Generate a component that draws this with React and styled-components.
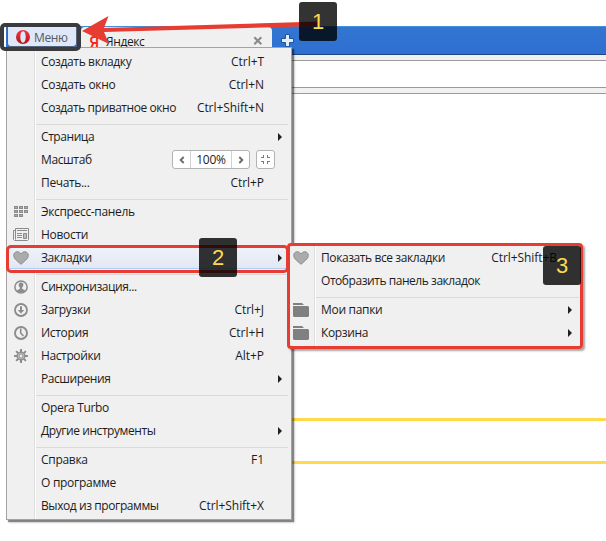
import React from "react";
import styled, { createGlobalStyle } from "styled-components";

const GlobalStyle = createGlobalStyle`
  * { box-sizing: border-box; }
  body { margin: 0; background: #fff; overflow: hidden; }
`;

const Page = styled.div`
  position: relative;
  width: 606px;
  height: 541px;
  overflow: hidden;
  background: #fff;
  color: #1c1c1c;
  font: 12px/23px "Open Sans", "Noto Sans", sans-serif;
`;

/* ---------- Browser window ---------- */
const Browser = styled.div`
  margin-left: 6px;
  padding-top: 26px;
`;

const TabStrip = styled.div`
  display: flex;
  align-items: stretch;
  height: 29px;
  border-top: 1px solid #438fdb;
  border-bottom: 1px solid #1d4a86;
  background: linear-gradient(#3376d0, #2e6fd2);
`;

const MenuButton = styled.button`
  display: flex;
  align-items: center;
  gap: 4px;
  width: 70px;
  height: 20px;
  margin: 0 0 0 1px;
  padding: 1px 0 0 8px;
  border: 1px solid #56647a;
  border-top: 0;
  border-radius: 0 0 4px 4px;
  background: #dfe8f8;
  color: #565a61;
  font: inherit;
  letter-spacing: -0.35px;
`;

const Tab = styled.div`
  display: flex;
  align-items: flex-start;
  width: 191px;
  margin-left: 4px;
  padding: 6px 9px 0 7px;
  border-radius: 4px 4px 0 0;
  background: #f0f0f0;
`;

const TabTitle = styled.span`
  flex: 1;
  margin: 2px 0 0 7px;
  line-height: 14px;
  letter-spacing: -0.4px;
`;

const SiteMark = styled.span`
  width: 11px;
  color: #f5291b;
  font: bold 18px/20px "Liberation Sans", sans-serif;
  transform: scaleX(0.72);
`;

const NewTab = styled.div`
  margin: 7px 0 0 9px;
  line-height: 0;
`;

const Toolbar = styled.div`
  height: 39px;
  padding-top: 5px;
  border-bottom: 1px solid #9a9a9a;
  background: #f1f1f1;
`;

const AddressBar = styled.div`
  height: 28px;
  border-top: 1px solid #9a9a9a;
  border-bottom: 1px solid #9a9a9a;
  background: #fff;
`;

const Content = styled.div`
  padding-top: 324px;
`;

const YellowFrame = styled.div`
  height: 46px;
  border-top: 3px solid #ffda4b;
  border-bottom: 3px solid #ffda4b;
`;

/* ---------- Menus (overlays) ---------- */
const MenuPanel = styled.div`
  position: absolute;
  left: 6px;
  top: 47px;
  width: 286px;
  height: 473px;
  padding: 2px 2px 1px 0;
  border: 1px solid #a3a3a3;
  background: linear-gradient(90deg, #f0f0f0 27px, #dedede 27px 28px, #fff 28px 29px, #f0f0f0 29px);
  box-shadow: 2px 2px 1px rgba(0, 0, 0, 0.42), 3px 3px 2px rgba(0, 0, 0, 0.12);
`;

const SubmenuPanel = styled(MenuPanel)`
  left: 287px;
  top: 243px;
  width: 296px;
  height: 106px;
  padding: 0;
  border: 3px solid #e63c31;
  border-radius: 4px;
  background: linear-gradient(90deg, #f0f0f0 24px, #dedede 24px 25px, #fff 25px 26px, #f0f0f0 26px);
  box-shadow: 2px 2px 2px rgba(0, 0, 0, 0.35);
`;

const Row = styled.div`
  display: flex;
  align-items: center;
  height: 23px;
  margin-right: 1px;
  background: ${(p) => (p.$active ? "linear-gradient(rgba(240,243,249,.9), rgba(224,231,243,.9))" : "none")};
  box-shadow: ${(p) => (p.$active ? "inset 0 -1px #aecff7" : "none")};
`;

const IconCell = styled.span`
  display: flex;
  justify-content: center;
  align-items: center;
  width: ${(p) => (p.$sub ? 31 : 34)}px;
  padding-right: ${(p) => (p.$sub ? 9 : 6)}px;
`;

const Label = styled.span`
  flex: 1;
  white-space: nowrap;
  letter-spacing: ${(p) => p.$track - 0.05}px;
`;

const Shortcut = styled.span`
  margin-right: ${(p) => (p.$sub ? 22 : 24)}px;
  white-space: nowrap;
  letter-spacing: -0.06px;
`;

const Divider = styled.div`
  height: 6px;
  margin: 0 1px 0 ${(p) => (p.$sub ? 26 : 29)}px;
  border-bottom: 1px solid #dadada;
`;

const SubArrow = styled.i`
  margin-right: ${(p) => (p.$sub ? 7 : 6)}px;
  border: solid transparent;
  border-width: 4px 0 4px 4px;
  border-left-color: #202020;
`;

const ZoomControls = styled.div`
  display: flex;
  gap: 6px;
  margin-right: 13px;
`;

const ZoomGroup = styled.div`
  display: flex;
  height: 19px;
  border: 1px solid #b3b3b3;
  border-radius: 3px;
  background: #fff;
  line-height: 17px;
`;

const ZoomCell = styled.span`
  display: flex;
  justify-content: center;
  align-items: center;
  width: ${(p) => p.$w}px;
  border-left: ${(p) => (p.$split ? "1px solid #d0d0d0" : "0")};
  letter-spacing: -0.2px;
`;

/* ---------- Annotations ---------- */
const Outline = styled.div`
  position: absolute;
  left: ${(p) => p.$x}px;
  top: ${(p) => p.$y}px;
  width: ${(p) => p.$w}px;
  height: ${(p) => p.$h}px;
  border: ${(p) => p.$b}px solid ${(p) => p.$color};
  border-radius: 5px;
`;

const ArrowLayer = styled.svg`
  position: absolute;
  left: 78px;
  top: 10px;
`;

const Badge = styled.div`
  position: absolute;
  left: ${(p) => p.$x}px;
  top: ${(p) => p.$y}px;
  width: 38px;
  height: 39px;
  border-radius: 3px;
  background: rgba(0, 0, 0, 0.8);
  color: #ffd94c;
  text-align: center;
  font: 22px/39px "Liberation Sans", sans-serif;
`;

/* ---------- Icons ---------- */
const ICON = "#8b8b8b";

const icons = {
  grid: (
    <svg width="14" height="12" viewBox="0 0 14 12" fill="#8b8b8b">
      {[0, 5, 10].map((x) =>
        [0, 4, 8].map((y) => (x === 10 && y === 8 ? null : <g key={`${x}-${y}`}>
          <rect x={x} y={y} width="4" height="3" /><rect x={x + 1} y={y + 1} width="2" height="1" fill="#aaa" /></g>))
      )}
    </svg>
  ),
  news: (
    <svg width="16" height="13" viewBox="0 0 16 13" fill="none" stroke={ICON}>
      <path d="M2.500 2.500h-2v9l1 1H14.500l1-1V.5h-13v11" />
      <path d="M4 2.500h10M4 5.500h5M4 7.500h5M4 9.500h5" />
      <path d="M10.500 5.500h3v5h-3z" fill="#bbb" />
    </svg>
  ),
  heart: (
    <svg width="16" height="14" viewBox="0 0 16 14">
      <path d="M8 13.300C5.500 11 .7 7.900.7 4.400.7 2.300 2.300.7 4.300.7 5.900.7 7.300 1.600 8 3 8.700 1.600 10.100.7 11.700.7 13.700.7 15.300 2.300 15.300 4.400 15.300 7.900 10.500 11 8 13.300Z" fill="#ababab" stroke="#8f8f8f" />
    </svg>
  ),
  sync: (
    <svg width="14" height="14" viewBox="0 0 14 14">
      <circle cx="7" cy="7" r="6.100" fill="none" stroke={ICON} strokeWidth="1.500" />
      <path d="M7 2.500a2.300 2.300 0 0 0-2.300 2.500c0 1.300.6 2 1.200 2.600v1.200L2.800 10.500C4 12 5.400 12.700 7 12.700s3-.7 4.200-2.200L8.100 8.800V7.600C8.700 7 9.300 6.300 9.300 5A2.300 2.300 0 0 0 7 2.500z" fill={ICON} />
    </svg>
  ),
  download: (
    <svg width="14" height="14" viewBox="0 0 14 14">
      <circle cx="7" cy="7" r="6" fill="none" stroke={ICON} strokeWidth="1.800" />
      <path d="M6 3.200h2V7h2.300L7 10.500 3.700 7H6z" fill={ICON} />
    </svg>
  ),
  history: (
    <svg width="14" height="14" viewBox="0 0 14 14" fill="none" stroke={ICON}>
      <circle cx="7" cy="7" r="6" strokeWidth="1.900" />
      <path d="M6.700 2.500V7l2.700 3" strokeWidth="1.600" />
    </svg>
  ),
  gear: (
    <svg width="14" height="14" viewBox="0 0 14 14" fill="none" stroke={ICON}>
      <circle cx="7" cy="7" r="3.800" strokeWidth="1.500" />
      <circle cx="7" cy="7" r="2.900" stroke="#b0b0b0" strokeWidth=".8" />
      <circle cx="7" cy="7" r="2" strokeWidth="1" />
      {[0, 45, 90, 135, 180, 225, 270, 315].map((a) => (
        <path key={a} d="M7 .1v2.800" strokeWidth="2" transform={`rotate(${a} 7 7)`} />
      ))}
    </svg>
  ),
  folder: (
    <svg width="16" height="14" viewBox="0 0 16 14" fill="#808080">
      <path d="M0 0h9l2 2H0z" />
      <path d="M0 3h15l1 1v9l-1 1H1l-1-1z" />
    </svg>
  ),
};

const OperaLogo = () => (
  <svg width="14" height="14" viewBox="0 0 14 14">
    <defs>
      <linearGradient id="opera" x1="0" y1="0" x2="0" y2="1">
        <stop offset="0" stopColor="#ef3a3f" />
        <stop offset="1" stopColor="#b80f1c" />
      </linearGradient>
    </defs>
    <path fillRule="evenodd" fill="url(#opera)" d="M7 0a7 7 0 1 0 0 14A7 7 0 0 0 7 0zm0 1.300c1.700 0 2.700 2.400 2.700 5.700S8.700 12.700 7 12.700 4.300 10.300 4.300 7 5.300 1.300 7 1.300z" />
  </svg>
);

const Chevron = ({ d }) => (
  <svg width="6" height="8" viewBox="0 0 6 8" fill="none" stroke="#6b6b6b" strokeWidth="1.900">
    <path d={d} />
  </svg>
);

const ZoomBox = () => (
  <ZoomControls>
    <ZoomGroup>
      <ZoomCell $w={17}><Chevron d="M4.700 1L1.700 4l3 3" /></ZoomCell>
      <ZoomCell $w={41} $split>100%</ZoomCell>
      <ZoomCell $w={18} $split><Chevron d="M1.300 1l3 3-3 3" /></ZoomCell>
    </ZoomGroup>
    <ZoomGroup>
      <ZoomCell $w={17}>
        <svg width="9" height="9" viewBox="0 0 9 9" fill="#7a7a7a">
          <path d="M2 0h1v3H0V2h2zM6 0h1v2h2v1H6zM0 6h3v3H2V7H0zM6 6h3v1H7v2H6z" />
        </svg>
      </ZoomCell>
    </ZoomGroup>
  </ZoomControls>
);

/* ---------- Data ---------- */
const mainItems = [
  { text: "Создать вкладку", key: "Ctrl+T", track: -0.31 },
  { text: "Создать окно", key: "Ctrl+N", track: -0.27 },
  { text: "Создать приватное окно", key: "Ctrl+Shift+N", track: -0.38 },
  null,
  { text: "Страница", sub: true, track: -0.38 },
  { text: "Масштаб", zoom: true, track: -0.33 },
  { text: "Печать...", key: "Ctrl+P", track: -0.3 },
  null,
  { text: "Экспресс-панель", icon: "grid", track: -0.29 },
  { text: "Новости", icon: "news", track: -0.24 },
  { text: "Закладки", icon: "heart", sub: true, active: true, track: -0.38 },
  null,
  { text: "Синхронизация...", icon: "sync", track: -0.38 },
  { text: "Загрузки", icon: "download", key: "Ctrl+J", track: -0.28 },
  { text: "История", icon: "history", key: "Ctrl+H", track: -0.25 },
  { text: "Настройки", icon: "gear", key: "Alt+P", track: -0.33 },
  { text: "Расширения", sub: true, track: -0.4 },
  null,
  { text: "Opera Turbo", track: -0.27 },
  { text: "Другие инструменты", sub: true, track: -0.38 },
  null,
  { text: "Справка", key: "F1", track: -0.25 },
  { text: "О программе", track: -0.23 },
  { text: "Выход из программы", key: "Ctrl+Shift+X", track: -0.36 },
];

const bookmarkItems = [
  { text: "Показать все закладки", icon: "heart", key: "Ctrl+Shift+B", track: -0.36 },
  { text: "Отобразить панель закладок", track: -0.4 },
  null,
  { text: "Мои папки", icon: "folder", sub: true, track: -0.25 },
  { text: "Корзина", icon: "folder", sub: true, track: -0.3 },
];

const Items = ({ items, nested }) =>
  items.map((it, i) =>
    it === null ? (
      <Divider key={i} $sub={nested} />
    ) : (
      <Row key={i} $active={it.active}>
        <IconCell $sub={nested}>{it.icon && icons[it.icon]}</IconCell>
        <Label $track={it.track}>{it.text}</Label>
        {it.key && <Shortcut $sub={nested}>{it.key}</Shortcut>}
        {it.zoom && <ZoomBox />}
        {it.sub && <SubArrow $sub={nested} />}
      </Row>
    )
  );

export default function App() {
  return (
    <Page>
      <GlobalStyle />
      <Browser>
        <TabStrip>
          <MenuButton><OperaLogo />Меню</MenuButton>
          <Tab>
            <SiteMark>Я</SiteMark>
            <TabTitle>Яндекс</TabTitle>
            <svg width="10" height="14" viewBox="0 0 10 14" stroke="#8b8b8b" strokeWidth="2.200">
              <path d="M1.300 4.300l7 7M8.300 4.300l-7 7" />
            </svg>
          </Tab>
          <NewTab>
            <svg width="13" height="13" viewBox="0 0 13 13">
              <path d="M4.500.5h4v4h4v4h-4v4h-4v-4h-4v-4h4z" fill="#e4eefb" stroke="#1f549f" />
            </svg>
          </NewTab>
        </TabStrip>
        <Toolbar><AddressBar /></Toolbar>
        <Content><YellowFrame /></Content>
      </Browser>

      <MenuPanel><Items items={mainItems} /></MenuPanel>
      <Outline $x={6} $y={245} $w={283} $h={28} $b={3} $color="#e63c31" />
      <SubmenuPanel><Items items={bookmarkItems} nested /></SubmenuPanel>

      <Outline $x={0} $y={23} $w={81} $h={28} $b={4} $color="#3a3b3d" />
      <ArrowLayer width="250" height="40" viewBox="78 10 250 40">
        <path d="M82 31L108.500 16 104 28 320 21.500V26L104 32 109 44Z" fill="#e63c31" />
      </ArrowLayer>
      <Badge $x={299} $y={2}>1</Badge>
      <Badge $x={199} $y={238}>2</Badge>
      <Badge $x={543} $y={246}>3</Badge>
    </Page>
  );
}
